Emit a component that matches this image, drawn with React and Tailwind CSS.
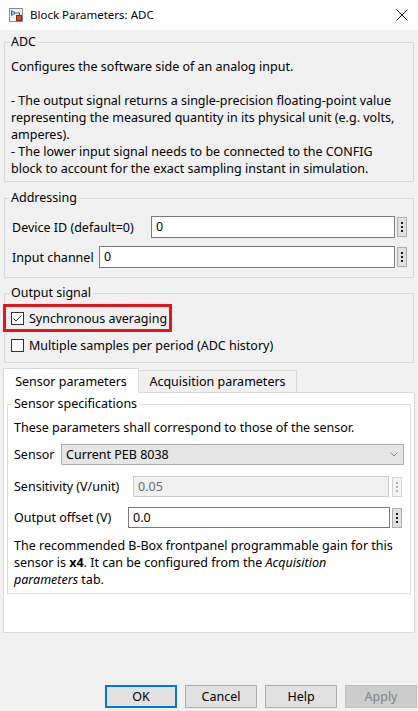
import React from "react";

const Dots = ({ disabled }) => (
  <div
    className={
      disabled
        ? "ml-[3px] w-[10px] h-[20px] shrink-0 border border-[#d4d4d4] bg-[#f3f3f3] flex flex-col items-center justify-center gap-[2px]"
        : "ml-[2px] w-[10px] h-[20px] shrink-0 border border-[#adadad] bg-[#e1e1e1] flex flex-col items-center justify-center gap-[2px]"
    }
  >
    {[0, 1, 2].map((i) => (
      <div key={i} className={disabled ? "w-[2px] h-[2px] bg-[#b4b4b4]" : "w-[2px] h-[2px] bg-[#1e1e1e]"} />
    ))}
  </div>
);

const Check = ({ checked }) => (
  <div className="w-[13px] h-[13px] shrink-0 border border-[#333333] bg-white flex items-center justify-center">
    {checked && (
      <svg width="11" height="11" viewBox="0 0 11 11">
        <path d="M1.5 5.5 L4 8 L9.5 2.5" fill="none" stroke="#333" strokeWidth="1" />
      </svg>
    )}
  </div>
);

export default function App() {
  return (
    <div className="w-[418px] h-[711px] bg-[#f0f0f0] flex flex-col overflow-hidden text-black text-[12.5px] leading-[17px] [font-family:'Noto_Sans',sans-serif]">
      {/* Title bar */}
      <div className="h-[30px] bg-white flex items-center shrink-0">
        <svg className="ml-[9px]" width="14" height="14" viewBox="0 0 14 14">
          <rect x="0.5" y="0.5" width="13" height="13" fill="#f4f4f4" stroke="#8c8c8c" />
          <polygon points="2.5,2.5 2.5,7.5 6.5,5" fill="#9cc3ee" stroke="#2f6fc2" strokeWidth="1" />
          <path d="M6.5 5 H10.5 V7.5" fill="none" stroke="#555" strokeWidth="1" />
          <rect x="7.5" y="7.5" width="5" height="5" fill="#e0452b" stroke="#7a2a1a" strokeWidth="1" />
        </svg>
        <div className="ml-[7px] text-[11.5px] leading-[14px]">Block Parameters: ADC</div>
        <div className="flex-1" />
        <svg className="mr-[10px]" width="12" height="12" viewBox="0 0 12 12">
          <path d="M0.5 0.5 L11.5 11.5 M11.5 0.5 L0.5 11.5" stroke="#111" strokeWidth="1" />
        </svg>
      </div>

      {/* ADC group */}
      <fieldset className="mx-[4px] mt-[4px] border border-[#d7d7d7] pl-[4px] pr-[4px] pb-[4px]">
        <legend className="px-[2px] leading-[16px]">ADC</legend>
        <div className="pt-[8px] pl-[2px] whitespace-nowrap">
          <div>Configures the software side of an analog input.</div>
          <div className="h-[17px]" />
          <div>- The output signal returns a single-precision floating-point value</div>
          <div>representing the measured quantity in its physical unit (e.g. volts,</div>
          <div>amperes).</div>
          <div>- The lower input signal needs to be connected to the CONFIG</div>
          <div>block to account for the exact sampling instant in simulation.</div>
        </div>
      </fieldset>

      {/* Addressing */}
      <fieldset className="mx-[4px] mt-[8px] border border-[#d7d7d7] pl-[4px] pr-[6px] pb-[9px]">
        <legend className="px-[2px] leading-[16px]">Addressing</legend>
        <div className="pt-[10px] pl-[3px] flex flex-col gap-[8px]">
          <div className="flex items-center">
            <div className="w-[139px] shrink-0 whitespace-nowrap">Device ID (default=0)</div>
            <div className="flex-1 h-[22px] border border-[#7a7a7a] bg-white pl-[4px] leading-[20px]">0</div>
            <Dots />
          </div>
          <div className="flex items-center">
            <div className="w-[87px] shrink-0 whitespace-nowrap">Input channel</div>
            <div className="flex-1 h-[22px] border border-[#7a7a7a] bg-white pl-[4px] leading-[20px]">0</div>
            <Dots />
          </div>
        </div>
      </fieldset>

      {/* Output signal */}
      <fieldset className="mx-[4px] mt-[7px] border border-[#d7d7d7] pl-[4px] pr-[4px] pb-[3px]">
        <legend className="px-[2px] leading-[16px]">Output signal</legend>
        <div className="pt-[3px]">
          <div className="-ml-[6px] w-[169px] h-[28px] border-[3px] border-[#e3151d] flex items-center">
            <div className="ml-[5px]">
              <Check checked />
            </div>
            <div className="ml-[5px] whitespace-nowrap">Synchronous averaging</div>
          </div>
          <div className="h-[27px] flex items-center">
            <div className="ml-[2px]">
              <Check />
            </div>
            <div className="ml-[5px] whitespace-nowrap">Multiple samples per period (ADC history)</div>
          </div>
        </div>
      </fieldset>

      {/* Tabs */}
      <div className="mx-[3px] mt-[5px] flex items-end">
        <div className="relative z-10 -mb-[1px] w-[136px] h-[25px] bg-white border-l border-t border-r border-[#d9d9d9] flex items-center justify-center whitespace-nowrap">
          Sensor parameters
        </div>
        <div className="w-[158px] h-[22px] bg-[#f0f0f0] border-t border-r border-[#d9d9d9] flex items-center justify-center whitespace-nowrap">
          Acquisition parameters
        </div>
      </div>
      <div className="mx-[3px] border border-[#d9d9d9] bg-white pb-[38px]">
        <fieldset className="mx-[3px] mt-[3px] border border-[#dcdcdc] pl-[4px] pr-[6px] pb-[5px]">
          <legend className="px-[2px] leading-[16px]">Sensor specifications</legend>
          <div className="pt-[7px] pl-[2px]">
            <div className="whitespace-nowrap">These parameters shall correspond to those of the sensor.</div>
            <div className="mt-[8px] flex items-center">
              <div className="w-[47px] shrink-0 whitespace-nowrap">Sensor</div>
              <div className="flex-1 h-[21px] border border-[#adadad] bg-[#e5e5e5] flex items-center pl-[4px]">
                <div className="flex-1 whitespace-nowrap">Current PEB 8038</div>
                <svg className="mr-[5px]" width="8" height="5" viewBox="0 0 8 5">
                  <path d="M0.5 0.5 L4 4 L7.5 0.5" fill="none" stroke="#8a8a8a" strokeWidth="1" />
                </svg>
              </div>
            </div>
            <div className="mt-[11px] mr-[2px] flex items-center">
              <div className="w-[119px] shrink-0 whitespace-nowrap">Sensitivity (V/unit)</div>
              <div className="flex-1 h-[21px] border border-[#cccccc] bg-[#f0f0f0] text-[#6d6d6d] pl-[4px] leading-[19px]">0.05</div>
              <Dots disabled />
            </div>
            <div className="mt-[10px] mr-[2px] flex items-center">
              <div className="w-[114px] shrink-0 whitespace-nowrap">Output offset (V)</div>
              <div className="flex-1 h-[21px] border border-[#7a7a7a] bg-white pl-[4px] leading-[19px]">0.0</div>
              <Dots />
            </div>
            <div className="mt-[9px] whitespace-nowrap">
              <div>The recommended B-Box frontpanel programmable gain for this</div>
              <div>
                sensor is <b>x4</b>. It can be configured from the <i>Acquisition</i>
              </div>
              <div>
                <i>parameters</i> tab.
              </div>
            </div>
          </div>
        </fieldset>
      </div>

      {/* Buttons */}
      <div className="mt-auto pb-[3px] pr-[1px] flex justify-end gap-[8px]">
        <div className="w-[72px] h-[23px] border-2 border-[#0078d7] bg-[#e1e1e1] flex items-center justify-center">OK</div>
        <div className="w-[72px] h-[23px] border border-[#adadad] bg-[#e1e1e1] flex items-center justify-center">Cancel</div>
        <div className="w-[72px] h-[23px] border border-[#adadad] bg-[#e1e1e1] flex items-center justify-center">Help</div>
        <div className="w-[72px] h-[23px] border border-[#bfbfbf] bg-[#cccccc] text-[#838383] flex items-center justify-center">Apply</div>
      </div>
    </div>
  );
}
